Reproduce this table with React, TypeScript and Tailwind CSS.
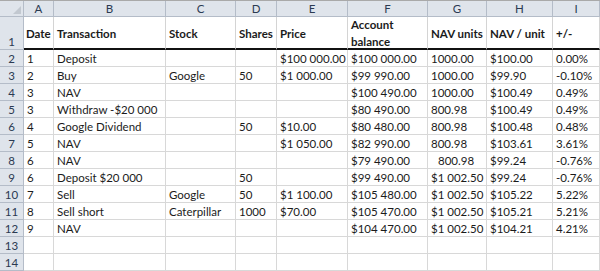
const cols = ["A", "B", "C", "D", "E", "F", "G", "H", "I"];

const rows: string[][] = [
  ["1", "Deposit", "", "", "$100 000.00", "$100 000.00", "1000.00", "$100.00", "0.00%"],
  ["2", "Buy", "Google", "50", "$1 000.00", "$99 990.00", "1000.00", "$99.90", "-0.10%"],
  ["3", "NAV", "", "", "", "$100 490.00", "1000.00", "$100.49", "0.49%"],
  ["3", "Withdraw -$20 000", "", "", "", "$80 490.00", "800.98", "$100.49", "0.49%"],
  ["4", "Google Dividend", "", "50", "$10.00", "$80 480.00", "800.98", "$100.48", "0.48%"],
  ["5", "NAV", "", "", "$1 050.00", "$82 990.00", "800.98", "$103.61", "3.61%"],
  ["6", "NAV", "", "", "", "$79 490.00", "  800.98", "$99.24", "-0.76%"],
  ["6", "Deposit $20 000", "", "50", "", "$99 490.00", "$1 002.50", "$99.24", "-0.76%"],
  ["7", "Sell", "Google", "50", "$1 100.00", "$105 480.00", "$1 002.50", "$105.22", "5.22%"],
  ["8", "Sell short", "Caterpillar", "1000", "$70.00", "$105 470.00", "$1 002.50", "$105.21", "5.21%"],
  ["9", "NAV", "", "", "", "$104 470.00", "$1 002.50", "$104.21", "4.21%"],
  ["", "", "", "", "", "", "", "", ""],
  ["", "", "", "", "", "", "", "", ""],
];

const titles = ["Date", "Transaction", "Stock", "Shares", "Price", "Account balance", "NAV units", "NAV / unit", "+/-"];

export default function App() {
  return (
    <div
      className="w-[600px] h-[271px] overflow-hidden bg-white text-[11.5px] text-[#1b1b1b]"
      style={{ fontFamily: "Lato, 'Open Sans', sans-serif" }}
    >
      <div className="grid grid-cols-[24px_30px_112px_70px_41px_71px_80px_59px_66px_47px] grid-rows-[16px_33px_repeat(13,17px)] border-t border-[#a9a9a9]">
        {/* corner */}
        <div className="relative bg-[#dfe4eb] border-r border-b border-[#b4bcc8]">
          <div className="absolute right-[2px] bottom-[2px] w-0 h-0 border-l-[8px] border-l-transparent border-b-[8px] border-b-[#c2c8d0]" />
        </div>
        {cols.map((c) => (
          <div
            key={c}
            className="flex items-center justify-center bg-[#dfe4eb] border-r border-b border-[#b4bcc8] text-[#2b3a52] leading-none"
          >
            {c}
          </div>
        ))}

        {/* row 1 */}
        <div className="flex items-end justify-center bg-[#dfe4eb] border-r border-b border-[#b4bcc8] text-[#2b3a52] leading-[14px]">
          1
        </div>
        {titles.map((t, i) => (
          <div
            key={t}
            className={`flex items-center px-[3px] pt-[1px] font-bold border-b-2 border-b-[#111] border-r border-r-[#d4d4d4] leading-[17px] ${
              i === 0 ? "pl-[2px]" : ""
            }`}
          >
            <span className="whitespace-pre-line">{t === "Account balance" ? "Account\nbalance" : t}</span>
          </div>
        ))}

        {rows.map((r, ri) => (
          <Row key={ri} n={ri + 2} cells={r} />
        ))}
      </div>
    </div>
  );
}

function Row({ n, cells }: { n: number; cells: string[] }) {
  return (
    <>
      <div className="flex items-end justify-center bg-[#dfe4eb] border-r border-b border-[#b4bcc8] text-[#2b3a52] leading-[14px]">
        {n}
      </div>
      {cells.map((c, i) => (
        <div
          key={i}
          className="flex items-end px-[3px] border-r border-b border-[#d8d8d8] whitespace-pre leading-[14px] overflow-hidden"
        >
          {c.startsWith("  ") ? <span className="pl-[7px]">{c.trim()}</span> : c}
        </div>
      ))}
    </>
  );
}
